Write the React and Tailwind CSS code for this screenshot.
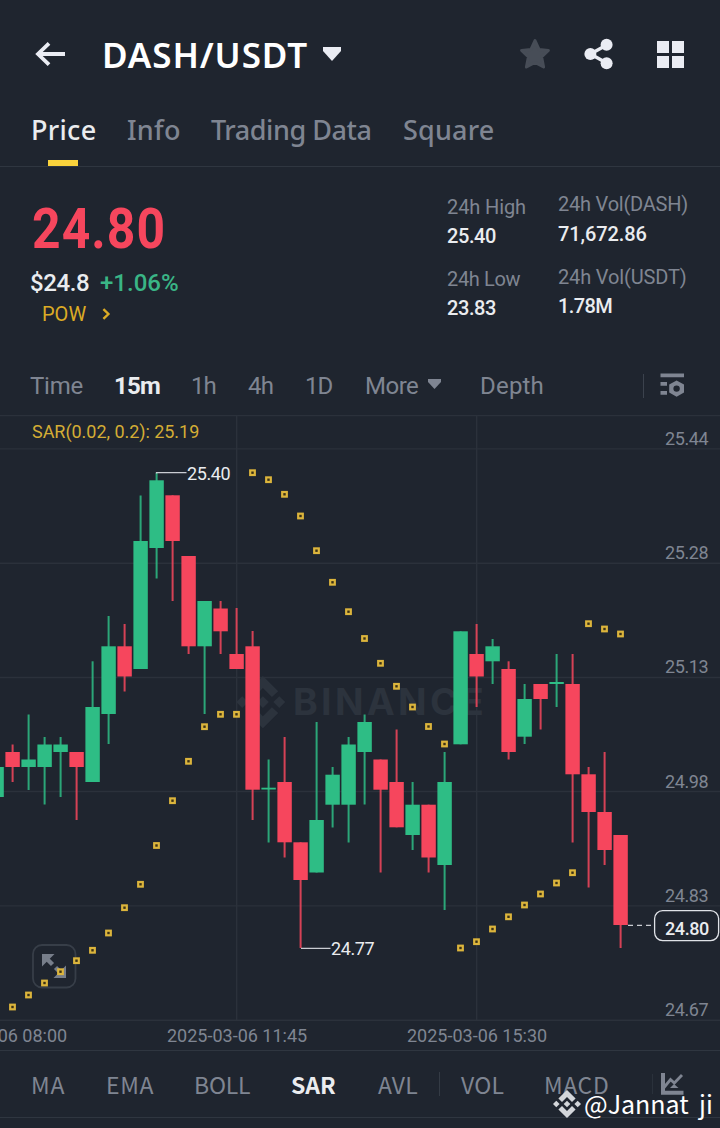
import React from "react";

const GREEN = "#2ebd85";
const RED = "#f6465d";

// [candle kind, wick top, body top, body bottom, wick bottom], one per 15 minutes
const CANDLES = [
  ["g", 767, 767, 797, 797],
  ["r", 744.5, 752, 767, 782],
  ["g", 714.5, 759.5, 767, 790],
  ["g", 737, 744.5, 767, 804.5],
  ["g", 737, 744.5, 752, 797],
  ["r", 752, 752, 767, 820],
  ["g", 661.3, 707, 782, 782],
  ["g", 616, 646.3, 714, 744],
  ["r", 624, 646.3, 676.5, 691.5],
  ["g", 495.5, 541, 669, 669],
  ["g", 473, 480.3, 548, 578.5],
  ["r", 495.3, 495.3, 541, 601],
  ["r", 556, 556, 646.3, 654],
  ["g", 601, 601, 646.3, 714],
  ["r", 601, 608.5, 631.3, 654],
  ["r", 608, 654, 669, 669],
  ["r", 631, 646.3, 789.7, 820],
  ["g", 759.5, 787.7, 789.5, 842.5],
  ["r", 737, 782, 842.3, 857.5],
  ["r", 842.3, 842.3, 880, 948],
  ["g", 722, 820, 872.5, 872.5],
  ["g", 767, 774.7, 804.7, 827.5],
  ["g", 737, 744.5, 804.7, 842.5],
  ["g", 714.5, 722, 752, 804.5],
  ["r", 759.5, 759.5, 789.7, 872.5],
  ["r", 729.5, 782, 827.3, 827.3],
  ["g", 782, 804.7, 835, 850],
  ["r", 804.7, 804.7, 857.5, 872.5],
  ["g", 752, 782, 865, 910],
  ["g", 631.3, 631.3, 744.3, 744.3],
  ["r", 624, 654, 676.5, 707],
  ["g", 639, 646.3, 661.3, 684],
  ["r", 661.3, 669, 752, 759.5],
  ["g", 684, 699, 736.7, 744],
  ["r", 684, 684, 699, 729.5],
  ["g", 654, 682, 684, 707],
  ["r", 654, 684, 774.3, 842.5],
  ["r", 767, 774.3, 812, 887.5],
  ["r", 752, 812, 850, 865],
  ["r", 835, 835, 925, 948],
];

const SAR = [
  1007, 995, 983, 971.7, 960.7, 950.3, 933, 907.7, 884.3, 845.5, 800.7, 761.3, 726.7, 714.3, 714.3,
  472.7, 479.7, 494.3, 516, 550.7, 582.3, 611.7, 638.5, 663.3, 686.3, 707, 726.5, 744,
  948, 941.7, 929, 916.8, 905, 894, 883, 872.7, 623.7, 629, 634,
];

const AXIS = [["25.44", 445], ["25.28", 559], ["25.13", 673], ["24.98", 788], ["24.83", 902], ["24.67", 1016]];

function Diamond({ cx, cy, r }) {
  return <path d={`M${cx} ${cy - r}L${cx + r} ${cy}L${cx} ${cy + r}L${cx - r} ${cy}Z`} />;
}

function BinanceMark({ className }) {
  return (
    <svg viewBox="0 0 28 28" className={className} fill="currentColor">
      <path d="M14 0L22.6 8.6L19 12.1L14 7.1L9 12.1L5.4 8.6Z" />
      <path d="M14 28L22.6 19.4L19 15.9L14 20.9L9 15.9L5.4 19.4Z" />
      <Diamond cx={14} cy={14} r={3.3} />
      <Diamond cx={3.3} cy={14} r={3.3} />
      <Diamond cx={24.7} cy={14} r={3.3} />
    </svg>
  );
}

function Header() {
  return (
    <header className="flex h-[108px] items-center">
      <svg className="ml-[34px] h-[26px] w-[32px]" viewBox="0 0 32 26" fill="none" stroke="#eaecf3" strokeWidth="3.8">
        <path d="M31 13H4M15 2.4L4 13L15 23.6" />
      </svg>
      <h1 className="ml-[36px] w-[221px] whitespace-nowrap pt-[2px] font-['Noto_Sans',sans-serif] text-[35px] font-semibold leading-[54px] tracking-[0.9px] text-white">
        DASH/USDT
      </h1>
      <svg className="h-[14px] w-[18px]" viewBox="0 0 18 14" fill="#eaecf3">
        <path d="M0 0H18V4L9 14L0 4Z" />
      </svg>
      <svg className="ml-[178px] h-[32px] w-[32px]" viewBox="0 0 32 32" fill="#474d57" stroke="#474d57" strokeWidth="3" strokeLinejoin="round">
        <path d="M16 2.6L20 11.4L29.4 12.4L22.6 18.8L24.6 29L16 24.4L7.4 29L9.4 18.8L2.6 12.4L12 11.4Z" />
      </svg>
      <svg className="ml-[32px] h-[32px] w-[32px]" viewBox="0 0 32 32" fill="#eaecf3">
        <path d="M23.6 7L7.5 16L23.6 25" fill="none" stroke="#eaecf3" strokeWidth="3.4" />
        <circle cx="7.4" cy="16" r="6" />
        <circle cx="23.6" cy="6.8" r="6" />
        <circle cx="23.6" cy="25.2" r="6" />
      </svg>
      <div className="ml-[41.5px] grid grid-cols-2 gap-[3px]">
        <i className="size-[12px] bg-[#eaecf3]" />
        <i className="size-[12px] bg-[#eaecf3]" />
        <i className="size-[12px] bg-[#eaecf3]" />
        <i className="size-[12px] bg-[#eaecf3]" />
      </div>
    </header>
  );
}

function Tabs() {
  return (
    <nav className="flex h-[59px] whitespace-nowrap border-b border-[#2f3640] pl-[31px] font-['Noto_Sans',sans-serif] text-[27px] font-medium leading-[43px] text-[#7f8592]">
      <div className="flex w-[96px] flex-col tracking-[0.3px] text-[#eaecef]">
        Price
        <span className="ml-[17px] mt-[9px] h-[6px] w-[30px] shrink-0 bg-[#fad33c]" />
      </div>
      <span className="w-[84px] tracking-[0.3px]">Info</span>
      <span className="w-[192px] tracking-[-0.45px]">Trading Data</span>
      <span className="tracking-[0.2px]">Square</span>
    </nav>
  );
}

function Summary() {
  return (
    <section className="flex h-[190px] whitespace-nowrap pl-[30px]">
      <div className="w-[417px] pt-[34px]">
        <div className="ml-[2px] origin-left scale-x-[0.89] text-[56px] font-bold leading-[56px] tracking-[1.2px] text-[#f6465d]">
          24.80
        </div>
        <div className="mt-[12px] flex text-[24px] font-medium leading-[28px]">
          <span className="w-[70px] tracking-[-0.4px] text-[#eaecef]">$24.8</span>
          <span className="tracking-[0px] text-[#3ab586]">+1.06%</span>
        </div>
        <div className="mt-[6px] flex items-center pl-[12px] text-[20px] leading-[22px] text-[#dbab25]">
          POW
          <svg className="ml-[16px] h-[12px] w-[9px]" viewBox="0 0 9 12" fill="none" stroke="currentColor" strokeWidth="2.4">
            <path d="M1.4 1.2L6.4 6L1.4 10.8" />
          </svg>
        </div>
      </div>
      <dl className="w-[111px] pt-[26px] text-[20px] leading-[28px]">
        <dt className="tracking-[-0.1px] text-[#7f8592]">24h High</dt>
        <dd className="pt-px font-medium tracking-[-0.4px] text-[#eaecef]">25.40</dd>
        <dt className="mt-[15px] tracking-[-0.35px] text-[#7f8592]">24h Low</dt>
        <dd className="pt-px font-medium tracking-[-0.4px] text-[#eaecef]">23.83</dd>
      </dl>
      <dl className="pt-[23px] text-[20px] leading-[28px]">
        <dt className="tracking-[-0.22px] text-[#7f8592]">24h Vol(DASH)</dt>
        <dd className="pt-[2px] font-medium tracking-[-0.1px] text-[#eaecef]">71,672.86</dd>
        <dt className="mt-[15px] tracking-[-0.15px] text-[#7f8592]">24h Vol(USDT)</dt>
        <dd className="pt-px font-medium tracking-[-0.6px] text-[#eaecef]">1.78M</dd>
      </dl>
    </section>
  );
}

function Intervals() {
  return (
    <nav className="flex h-[58px] items-center whitespace-nowrap pl-[30px] text-[24px] leading-[28px] text-[#7f8592]">
      <span className="w-[84px] tracking-[-0.2px]">Time</span>
      <span className="w-[77px] font-bold tracking-[-0.8px] text-[#eaecef]">15m</span>
      <span className="w-[57px] tracking-[-1px]">1h</span>
      <span className="w-[57px] tracking-[-0.8px]">4h</span>
      <span className="w-[60px] tracking-[-1px]">1D</span>
      <span className="w-[63px] tracking-[-0.5px]">More</span>
      <svg className="mb-[4px] h-[10px] w-[13px]" viewBox="0 0 13 10" fill="currentColor">
        <path d="M0 0H13V3L6.5 10L0 3Z" />
      </svg>
      <span className="ml-[39px] w-[163px] tracking-[0.2px]">Depth</span>
      <span className="h-[24px] w-px bg-[#3b424d]" />
      <svg className="ml-[16px] h-[26px] w-[26px]" viewBox="0 0 26 26" fill="currentColor">
        <path d="M0.5 0.5H24V4.2H0.5ZM0.5 9H7V12.8H0.5ZM0.5 18H7V21.8H0.5Z" />
        <path fillRule="evenodd" d="M16.6 7.4L24 11.4V19.6L16.6 23.8L9.2 19.6V11.4ZM16.6 12.4A3.2 3.2 0 1 0 16.6 18.8A3.2 3.2 0 1 0 16.6 12.4Z" />
      </svg>
    </nav>
  );
}

function Chart() {
  return (
    <div className="h-[636px] border-b border-[#2f3640]">
      <svg className="block h-[635px] w-[720px] overflow-hidden" viewBox="0 415 720 635" fontFamily="Roboto, sans-serif" fontSize="18">
        <g stroke="#2b313b" strokeWidth="1.4">
          {[415.6, 448.9, 563.2, 677.5, 791.5, 905.9, 1020.2].map((y) => (
            <path key={y} d={`M0 ${y}H720`} />
          ))}
          <path d="M236.7 415V1020M476.7 415V1020" />
        </g>
        <g fill="#2c333d">
          <g transform="translate(235 676) scale(1.8)">
            <path d="M15.5 0L24 8.5L20.5 11.7L15.5 6.7L10.5 11.7L7 8.5Z" />
            <path d="M15.5 29L24 20.5L20.5 17.3L15.5 22.3L10.5 17.3L7 20.5Z" />
            <Diamond cx={15.5} cy={14.5} r={3.3} />
            <Diamond cx={4} cy={14.5} r={3.3} />
            <Diamond cx={24.6} cy={14.5} r={3.3} />
          </g>
          <text x="293" y="715" fontFamily="Inter, sans-serif" fontWeight="700" fontSize="37.5" letterSpacing="3.3">BINANCE</text>
        </g>
        <g>
          <rect x="33" y="945" width="42.5" height="42.5" rx="9" fill="none" stroke="#373e48" strokeWidth="1.8" />
          <g fill="#777e8a" stroke="#777e8a">
            <path d="M42 954H54.5L42 966.5Z" stroke="none" />
            <path d="M46 958L52.5 964.5M55.5 967.5L60 972" strokeWidth="4.4" />
            <path d="M66 978H53.5L66 965.5Z" stroke="none" />
          </g>
        </g>
        {CANDLES.map(([kind, hi, top, bottom, lo], i) => {
          const x = 12.6 + 16 * (i - 1);
          const color = kind === "g" ? GREEN : RED;
          return (
            <g key={i} fill={color}>
              <rect x={x - 1} y={hi} width="2" height={lo - hi} opacity="0.85" />
              <rect x={x - 7.2} y={top} width="14.4" height={bottom - top} />
            </g>
          );
        })}
        {SAR.map((y, i) => (
          <rect key={i} x={10.2 + 16 * i} y={y - 2.3} width="4.6" height="4.6" fill="#3b3115" stroke="#dcb53c" strokeWidth="2.2" />
        ))}
        <g fill="none" stroke="#c9ccd2" strokeWidth="1.3">
          <path d="M156.5 473.4V472.6H186.5M301 948.3H330.5" />
          <path d="M628 925.4H654" strokeDasharray="5 4" />
          <rect x="654.6" y="910.6" width="64" height="30" rx="8" fill="#1f252f" stroke="#e0e3e8" />
        </g>
        <g fill="#eaecef" letterSpacing="-0.4">
          <text x="187" y="480">25.40</text>
          <text x="331" y="955">24.77</text>
          <text x="665" y="934.7" fontWeight="500">24.80</text>
        </g>
        <text x="32" y="438" fill="#d4ad35" letterSpacing="-0.04">SAR(0.02, 0.2): 25.19</text>
        <g fill="#7f8592">
          {AXIS.map(([label, y]) => (
            <text key={label} x="665" y={y} letterSpacing="-0.4">{label}</text>
          ))}
          <text x="-73" y="1042">2025-03-06 08:00</text>
          <text x="167" y="1042">2025-03-06 11:45</text>
          <text x="407" y="1042">2025-03-06 15:30</text>
        </g>
      </svg>
    </div>
  );
}

function Indicators() {
  return (
    <nav className="flex h-[67px] items-center whitespace-nowrap border-b border-[#2f3640] pl-[31px] font-['Noto_Sans_CJK_SC',sans-serif] text-[23px] leading-[34px] text-[#7f8592]">
      <span className="w-[75px] tracking-[0.8px]">MA</span>
      <span className="w-[88px] tracking-[0.6px]">EMA</span>
      <span className="w-[97px] tracking-[-0.2px]">BOLL</span>
      <span className="w-[87px] font-bold text-[#eaecef]">SAR</span>
      <span className="w-[61px] tracking-[0.2px]">AVL</span>
      <span className="mr-[21px] h-[24px] w-px bg-[#343b45]" />
      <span className="w-[83px] tracking-[0.2px]">VOL</span>
      <span className="w-[108px] tracking-[0.6px]">MACD</span>
      <span className="h-[20px] w-px bg-[#2a313b]" />
      <svg className="ml-[8px] h-[22px] w-[23px]" viewBox="0 0 23 22" fill="none" stroke="currentColor">
        <path d="M2 0V19.8H22.5" strokeWidth="4" />
        <path d="M3 14.5L9.5 6.5L13.3 10L21 2" strokeWidth="2.8" />
        <path d="M9 15L13 11L17.5 15Z" fill="currentColor" stroke="none" />
      </svg>
    </nav>
  );
}

export default function App() {
  return (
    <main className="relative h-[1128px] w-[720px] overflow-hidden bg-[#1f252f] font-[Roboto,sans-serif]">
      <Header />
      <Tabs />
      <Summary />
      <Intervals />
      <Chart />
      <Indicators />
      <div className="absolute left-[553px] top-[1086px] flex items-center whitespace-nowrap font-['Noto_Sans_CJK_SC',sans-serif] text-[25px] leading-[34px] text-white">
        <BinanceMark className="mt-[2px] size-[28px] text-[#d3d6da]" />
        <span className="ml-[3px] w-[115px]">@Jannat</span>
        <span>ji</span>
      </div>
    </main>
  );
}
